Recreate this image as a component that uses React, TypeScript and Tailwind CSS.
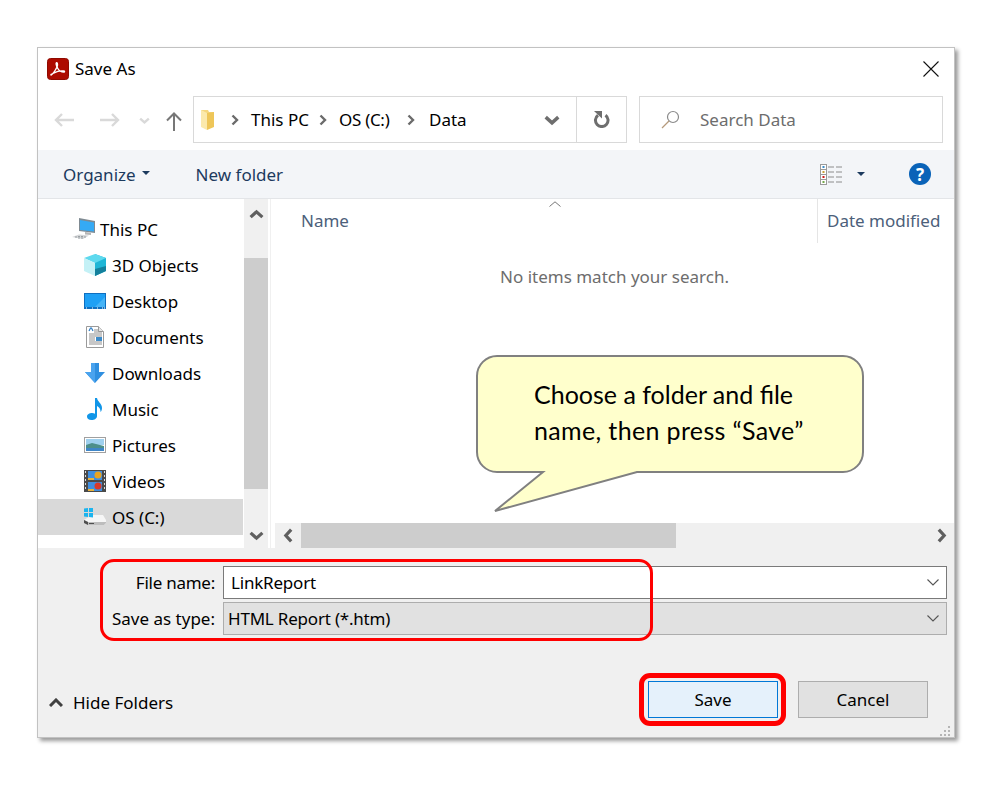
const font = { fontFamily: '"Noto Sans", sans-serif' };

function PdfIcon() {
  return (
    <svg width="22" height="22" viewBox="0 0 22 22">
      <rect x="0.5" y="0.5" width="21" height="21" rx="3" fill="#ad0b00" stroke="#8f0a00" />
      <path d="M4 17c2-1 4-4 6-8 .6-1.500.8-4-.2-4.200-1.200-.2-.6 3 1 5.700 1.500 2.500 3.500 3.600 6 3.600 1 0 1-1-.2-1.100-3-.3-7 .5-9.500 1.800C5.500 15.500 3.500 16.500 4 17z" fill="none" stroke="#fff" strokeWidth="1.400" />
    </svg>
  );
}

function FolderIcon() {
  return (
    <svg width="15" height="22" viewBox="0 0 15 22">
      <path d="M1 1h7l1 2h5v15H1z" fill="#f5d77f" />
      <path d="M1 1l6 3v17l-6-3z" fill="#fbe9ac" />
      <path d="M7 4l7-1v15l-7 3z" fill="#eec659" />
    </svg>
  );
}

function Crumb() {
  return (
    <svg width="8" height="12" viewBox="0 0 8 12" className="shrink-0">
      <path d="M1.500 1.500L6 6l-4.500 4.500" fill="none" stroke="#6b6b6b" strokeWidth="2.400" />
    </svg>
  );
}

// thick flat-ended chevrons used by the scrollbars and the address box
function Chev({ dir, color = '#5f5f5f', w = 14 }: { dir: 'up' | 'down' | 'left' | 'right'; color?: string; w?: number }) {
  const rotate = { down: '', up: 'rotate-180', left: 'rotate-90', right: '-rotate-90' }[dir];
  return (
    <svg width={w} height={w} viewBox="0 0 14 14" className={rotate}>
      <path d="M1.500 4.500L7 9.500l5.500-5" fill="none" stroke={color} strokeWidth="3" />
    </svg>
  );
}

function ThinChev() {
  return (
    <svg width="12" height="7" viewBox="0 0 12 7">
      <path d="M.5 .5L6 6l5.500-5.500" fill="none" stroke="#555555" strokeWidth="1.100" />
    </svg>
  );
}

function Caret({ color = '#1c3a5e' }: { color?: string }) {
  return (
    <svg width="8" height="4" viewBox="0 0 8 4">
      <path d="M0 0h8L4 4z" fill={color} />
    </svg>
  );
}

function BackArrow({ flip }: { flip?: boolean }) {
  return (
    <svg width="20" height="14" viewBox="0 0 20 14" className={flip ? 'rotate-180' : ''}>
      <path d="M20 7H2M8 1L2 7l6 6" fill="none" stroke="#d9d9d9" strokeWidth="2.400" />
    </svg>
  );
}

function UpArrow() {
  return (
    <svg width="16" height="19" viewBox="0 0 16 19">
      <path d="M8 19V2M1 8.500L8 1.500l7 7" fill="none" stroke="#777777" strokeWidth="2" />
    </svg>
  );
}

function RefreshIcon() {
  return (
    <svg width="17" height="17" viewBox="0 0 17 17">
      <path d="M5 4.200a6.300 6.300 0 1 0 7.500 0" fill="none" stroke="#6e6e6e" strokeWidth="3" />
      <path d="M1 0h8v7.500z" fill="#6e6e6e" />
    </svg>
  );
}

function CloseIcon() {
  return (
    <svg width="16" height="16" viewBox="0 0 16 16">
      <path d="M.5 .5l15 15M15.500 .5l-15 15" stroke="#111111" strokeWidth="1.100" />
    </svg>
  );
}

function SearchIcon() {
  return (
    <svg width="19" height="19" viewBox="0 0 19 19">
      <circle cx="12" cy="7" r="5.500" fill="none" stroke="#8a8a8a" strokeWidth="1.200" />
      <path d="M8 11L1 18" stroke="#b59a7c" strokeWidth="1.300" />
    </svg>
  );
}

function ViewIcon() {
  return (
    <svg width="22" height="21" viewBox="0 0 22 21">
      <rect x="0.500" y="0.500" width="6" height="20" fill="#fff" stroke="#9a9a9a" />
      <path d="M1 5.500h5M1 10.500h5M1 15.500h5" stroke="#9a9a9a" />
      <rect x="2.500" y="2" width="2" height="2" fill="#3a8bc8" />
      <rect x="2.500" y="7" width="2" height="2" fill="#c9a13a" />
      <rect x="2.500" y="12" width="2" height="2" fill="#d01818" />
      <rect x="2.500" y="17" width="2" height="2" fill="#74a84a" />
      <path d="M8 3h6M16 3h6M8 8h6M16 8h6M8 13h6M16 13h6M8 18h6M16 18h6" stroke="#8c8c8c" />
    </svg>
  );
}

function HelpIcon() {
  return (
    <div className="flex h-[22px] w-[22px] items-center justify-center rounded-full bg-[#0a63b8] text-[17px] font-bold leading-none text-white">?</div>
  );
}

function PcIcon() {
  return (
    <svg width="24" height="22" viewBox="0 0 24 22">
      <path d="M7 0l16 3v12l-16-2z" fill="#7f8a92" />
      <path d="M8 2l14 2.500v9L8 12z" fill="#35aaf5" />
      <path d="M13 14l6 .7v2.300l-6-.5z" fill="#b5b5b5" />
      <path d="M0 19l7-2.500 10 1-6 3.500z" fill="#d4d6d8" />
      <path d="M3 19h2M6 18.500h2M9 18.500h2M6 20h2M9 20h2M12 19h2" stroke="#9aa0a4" />
    </svg>
  );
}

function CubeIcon() {
  return (
    <svg width="22" height="22" viewBox="0 0 22 22">
      <path d="M11 0l11 4v13l-11 5z" fill="#1fb6d6" />
      <path d="M11 0L0 4l11 5 11-5z" fill="#5ed9ee" />
      <path d="M0 4l11 5v13L0 17z" fill="#c4f1f6" />
      <path d="M11 15l11-3v5l-11 5z" fill="#13809c" />
    </svg>
  );
}

function DesktopIcon() {
  return (
    <svg width="22" height="16" viewBox="0 0 22 16">
      <rect width="22" height="16" fill="#0f6fc0" />
      <rect x="1" y="1" width="20" height="13" fill="#1ea0f5" />
      <path d="M11 14L21 4v10z" fill="#46b4f7" />
      <path d="M2 15h1M8 15h1M13 15h1M18 15h1M20 15h1" stroke="#fff" />
    </svg>
  );
}

function DocIcon() {
  return (
    <svg width="18" height="22" viewBox="0 0 18 22" className="mx-[2px]">
      <path d="M0.500 0.500h12l5 5v16H.500z" fill="#fff" stroke="#9a9a9a" />
      <path d="M12.500 .500v5h5" fill="#e6e6e6" stroke="#9a9a9a" />
      <path d="M3 5l1.500-3h1L7 5" fill="none" stroke="#2c7cc4" strokeWidth="1.200" />
      <path d="M8 4h4M8 6h8M3 8h13M3 10h13M3 12h6M3 14h6M3 16h13M3 18h13" stroke="#8f8f8f" />
      <rect x="10" y="11" width="6" height="4" fill="#3c8bc9" />
    </svg>
  );
}

function DownloadIcon() {
  return (
    <svg width="20" height="20" viewBox="0 0 20 20" className="mx-[1px]">
      <path d="M6 0h8v9h6L10 20 0 9h6z" fill="#2f8fe0" />
      <path d="M6 0h4v20L0 9h6z" fill="#4aa3ee" />
    </svg>
  );
}

function MusicIcon() {
  return (
    <svg width="18" height="22" viewBox="0 0 18 22" className="mx-[2px]">
      <path d="M9 0h2c.5 4 5 5 5 10 0 1.500-.5 3-1.500 4 .3-3-1.500-5-3.500-6v10c0 2.500-2.500 4-5.500 4S1 20.500 1 18.500 3.500 15 6 15c1.200 0 2.300.3 3 .8z" fill="#1296e8" />
    </svg>
  );
}

function PicturesIcon() {
  return (
    <svg width="22" height="16" viewBox="0 0 22 16">
      <rect x="0.500" y="0.500" width="21" height="15" fill="#fff" stroke="#a0a0a0" />
      <rect x="2" y="2" width="18" height="6" fill="#9fd0ee" />
      <path d="M2 8l6-2 12 3v5H2z" fill="#4d8f8a" />
      <rect x="2" y="11" width="18" height="3" fill="#3f86c8" />
    </svg>
  );
}

function VideosIcon() {
  return (
    <svg width="22" height="22" viewBox="0 0 22 22">
      <rect width="22" height="22" fill="#4a4a4a" />
      <path d="M1 1h1v2H1zM1 5h1v2H1zM1 9h1v2H1zM1 13h1v2H1zM1 17h1v2H1zM20 1h1v2h-1zM20 5h1v2h-1zM20 9h1v2h-1zM20 13h1v2h-1zM20 17h1v2h-1z" fill="#ddd" />
      <rect x="4" y="1" width="14" height="9" fill="#3f8ee0" />
      <rect x="4" y="12" width="14" height="9" fill="#3f8ee0" />
      <circle cx="14" cy="5" r="3.500" fill="#e8a422" />
      <circle cx="14" cy="16" r="3.500" fill="#d8392b" />
      <path d="M4 8h6v2H4zM4 19h6v2H4z" fill="#e8b13a" />
    </svg>
  );
}

function DriveIcon() {
  return (
    <svg width="22" height="18" viewBox="0 0 22 18">
      <path d="M0 12l8-5h11l3 5v3l-2 2H4l-4-2z" fill="#f6f6f6" />
      <path d="M0 12l4 2h18v1l-2 2H4l-4-2z" fill="#bdbdbd" />
      <path d="M0 12l4 2v3l-4-2zM5 15h5v1H5z" fill="#4f4f4f" />
      <path d="M0 .5l4-.5v4H0zM5 0l4-.5V4H5zM0 5h4v4l-4-.5zM5 5h4v4.500L5 9z" fill="#1cb4ee" />
    </svg>
  );
}

function Grip() {
  return (
    <svg width="11" height="11" viewBox="0 0 11 11">
      <path d="M8 0h2v2H8zM4 4h2v2H4zM8 4h2v2H8zM0 8h2v2H0zM4 8h2v2H4zM8 8h2v2H8z" fill="#b5b5b5" />
    </svg>
  );
}

const places = [
  { name: '3D Objects', icon: <CubeIcon /> },
  { name: 'Desktop', icon: <DesktopIcon /> },
  { name: 'Documents', icon: <DocIcon /> },
  { name: 'Downloads', icon: <DownloadIcon /> },
  { name: 'Music', icon: <MusicIcon /> },
  { name: 'Pictures', icon: <PicturesIcon /> },
  { name: 'Videos', icon: <VideosIcon /> },
  { name: 'OS (C:)', icon: <DriveIcon />, selected: true },
];

export default function App() {
  return (
    <div className="relative h-[787px] w-[993px] overflow-hidden bg-white pl-[37px] pt-[47px] text-[17px] text-black" style={font}>
      <div className="flex h-[691px] w-[918px] flex-col border border-[#c2c2c2] bg-white shadow-[3px_3px_4px_rgba(0,0,0,0.4)]">
        {/* title bar */}
        <div className="flex h-[42px] items-center pl-[9px] pr-[15px]">
          <PdfIcon />
          <span className="ml-[6px] flex-1">Save As</span>
          <CloseIcon />
        </div>

        {/* address row */}
        <div className="flex h-[60px] pt-[6px]">
          <div className="flex h-[47px] w-[155px] items-center pl-[16px]">
            <BackArrow />
            <div className="ml-[26px]"><BackArrow flip /></div>
            <div className="ml-[19px] mt-[2px]"><Chev dir="down" color="#d9d9d9" w={11} /></div>
            <div className="ml-[16px] mt-[3px]"><UpArrow /></div>
          </div>
          <div className="flex h-[47px] w-[434px] items-center border border-[#d9d9d9]">
            <div className="flex flex-1 items-center pl-[6px]">
              <FolderIcon />
              <div className="ml-[16px]"><Crumb /></div>
              <span className="ml-[12px] w-[68px]">This PC</span>
              <Crumb />
              <span className="ml-[12px] w-[68px] tracking-[-0.3px]">OS (C:)</span>
              <Crumb />
              <span className="ml-[14px]">Data</span>
            </div>
            <div className="mr-[16px]"><Chev dir="down" color="#6e6e6e" w={16} /></div>
            <div className="flex h-full w-[50px] items-center justify-center border-l border-[#d9d9d9]">
              <RefreshIcon />
            </div>
          </div>
          <div className="ml-[12px] flex h-[47px] w-[304px] items-center border border-[#d9d9d9] pl-[21px] text-[#6d6d6d]">
            <SearchIcon />
            <span className="ml-[20px] pt-px">Search Data</span>
          </div>
        </div>

        {/* toolbar */}
        <div className="flex h-[49px] items-center border-b border-[#e3e5e8] bg-[#f3f5f8] pl-[25px] text-[#1c3a5e]">
          <span className="pt-px">Organize</span>
          <div className="mb-[2px] ml-[6px]"><Caret /></div>
          <span className="ml-[46px] flex-1 pt-px">New folder</span>
          <ViewIcon />
          <div className="ml-[15px] mr-[44px]"><Caret /></div>
          <div className="mr-[23px]"><HelpIcon /></div>
        </div>

        {/* main */}
        <div className="flex h-[349px]">
          <div className="w-[205px] pt-[12px]">
            <div className="flex h-[36px] items-center pl-[34px]">
              <PcIcon />
              <span className="ml-[4px] pt-px">This PC</span>
            </div>
            {places.map((p) => (
              <div key={p.name} className={`flex h-[36px] items-center pl-[46px] ${p.selected ? 'bg-[#d9d9d9]' : ''}`}>
                <div className="flex w-[22px] justify-center">{p.icon}</div>
                <span className="ml-[6px] pt-px">{p.name}</span>
              </div>
            ))}
          </div>
          <div className="ml-px flex w-[24px] flex-col bg-[#f0f0f0]">
            <div className="flex h-[59px] justify-center pt-[8px]">
              <Chev dir="up" w={15} />
            </div>
            <div className="h-[231px] bg-[#cdcdcd]" />
            <div className="flex flex-1 items-end justify-center pb-[5px]">
              <Chev dir="down" w={15} />
            </div>
          </div>
          <div className="ml-[2px] w-px bg-[#f0f0f0]" />
          <div className="ml-[4px] flex flex-1 flex-col">
            <div className="relative flex h-[44px] items-center">
              <span className="ml-[26px] w-[516px] text-[#4c607a]">Name</span>
              <svg width="12" height="6" viewBox="0 0 12 6" className="absolute left-[274px] top-[2px]">
                <path d="M.5 5.500L6 .8l5.500 4.700" fill="none" stroke="#777777" />
              </svg>
              <div className="h-full w-px bg-[#e5e5e5]" />
              <span className="ml-[9px] whitespace-nowrap text-[#4c607a]">Date modified</span>
            </div>
            <div className="flex-1 pt-[21px] text-center text-[#6d6d6d]">No items match your search.</div>
            <div className="flex h-[25px] bg-[#f0f0f0]">
              <div className="flex w-[26px] items-center justify-center">
                <Chev dir="left" w={15} />
              </div>
              <div className="w-[375px] bg-[#cdcdcd]" />
              <div className="flex flex-1 items-center justify-end pr-[5px]">
                <Chev dir="right" w={15} />
              </div>
            </div>
          </div>
        </div>

        {/* footer */}
        <div className="flex flex-1 flex-col border-t border-[#f0f0f0] bg-[#f0f0f0] pr-[7px] pt-[17px]">
          <div className="flex h-[33px] items-center">
            <span className="w-[177px] text-right tracking-[-0.25px]">File name:</span>
            <div className="ml-[8px] flex h-full flex-1 items-center justify-between border border-[#7a7a7a] bg-white pl-[7px] pr-[7px]">
              <span className="tracking-[-0.2px]">LinkReport</span>
              <ThinChev />
            </div>
          </div>
          <div className="mt-[3px] flex h-[33px] items-center">
            <span className="w-[177px] text-right">Save as type:</span>
            <div className="ml-[8px] flex h-full flex-1 items-center justify-between border border-[#adadad] bg-[#e1e1e1] pl-[4px] pr-[7px]">
              <span className="tracking-[-0.2px]">HTML Report (*.htm)</span>
              <ThinChev />
            </div>
          </div>
          <div className="mt-[46px] flex h-[37px] items-center pl-[11px] pr-[19px]">
            <div className="mt-[6px] flex flex-1 items-center">
              <svg width="14" height="9" viewBox="0 0 14 9">
                <path d="M1 8l6-6 6 6" fill="none" stroke="#404040" strokeWidth="3" />
              </svg>
              <span className="ml-[10px]">Hide Folders</span>
            </div>
            <button className="h-full w-[130px] border border-[#0078d7] bg-[#e5f1fb]">Save</button>
            <button className="ml-[20px] h-full w-[130px] border border-[#adadad] bg-[#e1e1e1]">Cancel</button>
          </div>
          <div className="-mr-[4px] mt-auto flex justify-end">
            <Grip />
          </div>
        </div>
      </div>

      {/* annotations */}
      <div className="absolute left-[100px] top-[559px] h-[82px] w-[553px] rounded-[14px] border-[3px] border-[#ff0000]" />
      <div className="absolute left-[639px] top-[673px] h-[53px] w-[147px] rounded-[11px] border-[5px] border-[#ff0000]" />

      <svg width="400" height="170" viewBox="0 0 400 170" className="absolute left-[470px] top-[350px]">
        <path
          d="M27 6H373a20 20 0 0 1 20 20V102a20 20 0 0 1-20 20H167L25 161L73 122H27a20 20 0 0 1-20-20V26a20 20 0 0 1 20-20z"
          fill="#ffffcc"
          stroke="#808080"
          strokeWidth="2"
        />
      </svg>
      <div className="absolute left-[534px] top-[376px] text-[25px] leading-[36px]" style={{ fontFamily: 'Lato, sans-serif' }}>
        <div>Choose a folder and file</div>
        <div className="tracking-[0.35px]">name, then press “Save”</div>
      </div>
    </div>
  );
}
